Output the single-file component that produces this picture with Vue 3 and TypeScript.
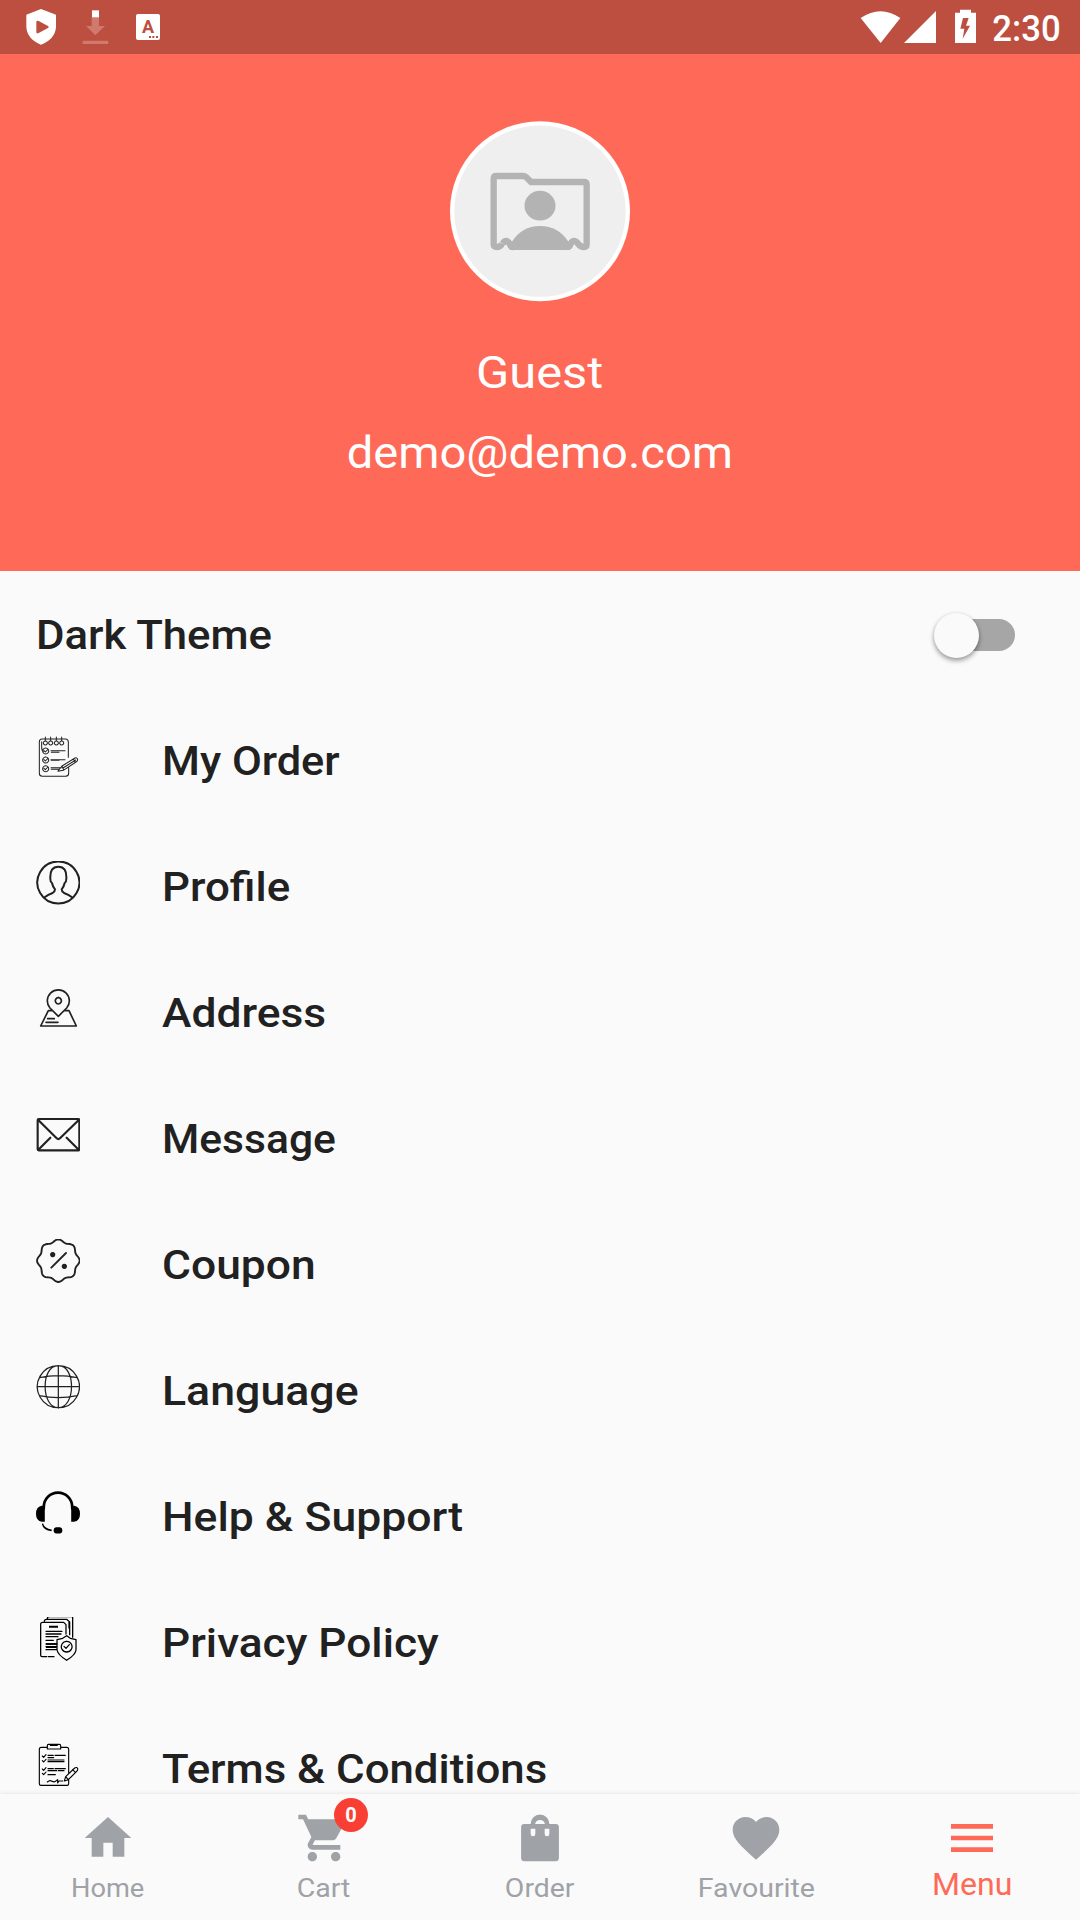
<script setup lang="ts">
interface MenuItem {
  label: string
  box: string
  stroke: string
  width: number
  fill?: string
  stretch: number
  color?: string
}

interface NavItem {
  label: string
  path: string
  badge?: string
  active?: boolean
  stretch: number
}

// Outline of the coupon seal: a circle with eight soft lobes.
const sealOutline = (cx: number, cy: number, radius: number, depth: number): string => {
  const points: string[] = []
  for (let i = 0; i < 96; i++) {
    const a = (i / 96) * Math.PI * 2
    const r = radius + depth * Math.cos(8 * a)
    points.push(`${(cx + r * Math.cos(a)).toFixed(2)} ${(cy + r * Math.sin(a)).toFixed(2)}`)
  }
  return `M${points.join('L')}Z`
}

const items: MenuItem[] = [
  {
    label: 'My Order',
    box: '48 45 132 132',
    width: 3.1,
    stretch: 1.07,
    stroke:
      'M145 112V66Q145 57 136 57H66Q58 57 58 66V160Q58 169 67 169H137Q146 169 146 160V143 M65 65V82Q65 92 70 94 M76 51V63 M92 51V63 M109 51V63 M125 51V63 ' +
      'M76 63a6 6 0 1 0 .1 0 M92 63a6 6 0 1 0 .1 0 M109 63a6 6 0 1 0 .1 0 M125 63a6 6 0 1 0 .1 0 ' +
      'M77 84a9 9 0 1 0 .1 0 M77 111a9 9 0 1 0 .1 0 M77 137a9 9 0 1 0 .1 0 M72 92l4 4 8-8 M72 119l4 4 8-8 M72 145l4 4 8-8 ' +
      'M93 92H135 M94 97H117 M93 119H135 M94 121H117 M93 143H124 M94 148H117 M114 153L126 138L165 114Q172 112 173 119Q173 123 168 126L130 151L114 154Z M126 138L131 150 M129 144L167 120 M160 117L166 127',
  },
  {
    label: 'Profile',
    box: '48 423 132 132',
    width: 6,
    stretch: 1.083,
    stroke:
      'M115 424.500a63 63 0 1 0 .1 0 M74 532Q84 524 98 519Q105 515 105 508Q98 499 96 489Q91 486 91 476Q89 440 115 440Q141 440 139 476Q139 486 134 489Q132 499 125 508Q125 515 132 519Q146 524 156 532',
  },
  {
    label: 'Address',
    box: '48 51 132 132',
    width: 5,
    stretch: 1.095,
    stroke:
      'M115 139L90 114A33 33 0 1 1 140 114Z M115 83a9 9.500 0 1 0 .1 0 M96 122H85L62 168H169L147 122H134 M83 146H103 M78 157H114',
  },
  {
    label: 'Message',
    box: '48 429 132 132',
    width: 6.4,
    stretch: 1.052,
    stroke: 'M56 447H175Q178 447 178 450V538Q178 541 175 541H56Q53 541 53 538V450Q53 447 56 447Z M54 449L110 505Q115 510 120 505L177 449 M55 539L91 503 M176 539L140 503',
  },
  {
    label: 'Coupon',
    box: '48 57 132 132',
    width: 5.6,
    stretch: 1.096,
    stroke: sealOutline(115, 122, 60, 3.9) + ' M94 143L138 99',
    fill: 'M98 96a8 8 0 1 0 .1 0Z M133 131a8 8 0 1 0 .1 0Z',
  },
  {
    label: 'Language',
    box: '48 433 132 135',
    width: 3.8,
    stretch: 1.103,
    stroke:
      'M115 435a64.500 64.500 0 1 0 .1 0 M115 434V565 M50 499H180 M115 435C60 434 62 565 115 564 M115 435C170 434 168 565 115 564 M57 472Q115 459 173 472 M57 527Q115 539 173 527',
  },
  {
    label: 'Help & Support',
    box: '48 813 135 132',
    width: 8,
    stretch: 1.099,
    color: '#000',
    stroke: 'M72 865V860A43 43 0 0 1 159 860V865',
    fill: 'M75 857V906H66Q48 903 48 882Q48 860 65 857Z M156 857V906H165Q183 903 183 882Q183 860 166 857Z M109 923H122Q129 924 129 932Q129 941 121 942H110Q102 941 102 932Q102 924 109 923Z M66 912L70 911Q73 926 96 930V935Q69 932 66 912Z',
  },
  {
    label: 'Privacy Policy',
    box: '48 51 132 132',
    width: 3.8,
    stretch: 1.092,
    color: '#000',
    stroke:
      'M80 170H66Q62 170 62 166V73Q62 67 68 67H131L138 74V102 M73 64Q73 58 80 58H140L149 66V104 M82 56Q82 50 89 50H158V112 M147 66V84 M78 94H126 M78 102H123 M78 110H114 M78 121H100 M78 132H112 M78 140H111 M85 170H102 M78 149H110 ' +
      'M140 107L151 115L168 119V150Q166 165 140 181Q114 165 111 150V119L128 115Z M140 124a16 16 0 1 0 .1 0 M132 139L138 145L148 134',
    fill: 'M87 77H114V83H87Z M78 130H110V134H78Z M78 138H110V144H78Z',
  },
  {
    label: 'Terms & Conditions',
    box: '48 429 132 132',
    width: 3.4,
    stretch: 1.081,
    color: '#000',
    stroke:
      'M82 442H64Q58 442 58 448V551Q58 556 63 556H141Q146 556 146 551V540 M58 458V468 M123 442H140Q146 442 146 448V520 M85 433H118Q122 433 122 437V447H82V437Q82 433 85 433Z M91 436H112 ' +
      'M67 468L71 472L78 464 M67 482L71 486L78 478 M67 507L71 511L78 503 M67 520L71 524L78 516 M84 466H100 M105 466H136 M84 473H101 M84 480H132 M84 485H132 M84 506H100 M105 506H136 M84 512H110 M115 512H132 M84 524H106 ' +
      'M82 546Q90 539 96 544Q104 548 109 542L113 539V549L117 543H128 M133 543L137 530L164 504Q171 500 173 506Q174 510 170 514L145 539Z M137 530L145 539 M158 509L166 517',
  },
]

const nav: NavItem[] = [
  { label: 'Home', stretch: 1.09, path: 'M10 20v-6h4v6h5v-8h3L12 3 2 12h3v8z' },
  {
    label: 'Cart',
    stretch: 1.14,
    badge: '0',
    path: 'M7 18c-1.100 0-1.990.9-1.990 2S5.900 22 7 22s2-.9 2-2-.9-2-2-2zM1 2v2h2l3.600 7.590-1.350 2.450c-.16.28-.25.61-.25.96 0 1.100.9 2 2 2h12v-2H7.420c-.14 0-.25-.11-.25-.25l.03-.12.9-1.630h7.450c.75 0 1.410-.41 1.750-1.030l3.580-6.490c.08-.14.12-.31.12-.48 0-.55-.45-1-1-1H5.210l-.94-2H1zm16 16c-1.100 0-1.990.9-1.990 2s.89 2 1.990 2 2-.9 2-2-.9-2-2-2z',
  },
  {
    label: 'Order',
    stretch: 1.135,
    path: 'M5.300 6H8V5.900A4 4 0 0 1 16 5.900V6H18.700Q20.100 6 20.100 7.400V20.500Q20.100 22 18.600 22H5.400Q3.900 22 3.900 20.500V7.400Q3.900 6 5.300 6ZM9.900 6H14.100A2.150 2.150 0 0 0 9.900 6ZM8 8V10.300A1 1 0 0 0 10 10.300V8ZM14 8V10.300A1 1 0 0 0 16 10.300V8Z',
  },
  {
    label: 'Favourite',
    stretch: 1.14,
    path: 'M12 21.350l-1.450-1.320C5.400 15.360 2 12.280 2 8.500 2 5.420 4.420 3 7.500 3c1.740 0 3.410.81 4.500 2.090C13.090 3.810 14.760 3 16.500 3 19.580 3 22 5.420 22 8.500c0 3.780-3.400 6.860-8.550 11.540L12 21.350z',
  },
  { label: 'Menu', stretch: 1.05, active: true, path: 'M3 18h18v-2H3v2zm0-5h18v-2H3v2zm0-7v2h18V6H3z' },
]
</script>

<template>
  <div class="screen">
    <div class="status">
      <div class="notices">
        <svg width="30" height="54" viewBox="78 0 90 162">
          <path fill="#fff" fill-rule="evenodd" d="M123 27L168 44V82Q165 118 123 134Q82 118 79 82V44Z M109 66V96Q109 103 116 99L144 84Q149 81 144 78L116 63Q109 60 109 66Z" />
        </svg>
        <svg width="27" height="54" viewBox="246 0 81 162">
          <path fill="#d07a6d" d="M275 52H297V78H315L286 106L258 78H275Z M248 122H325V132H248Z" />
          <path fill="#fff" d="M276 31H297V52H276Z" />
        </svg>
        <svg width="26" height="54" viewBox="408 0 78 162">
          <rect x="411" y="42" width="72" height="78" rx="6" fill="#fff" />
          <text x="447" y="99" text-anchor="middle" class="letter">A</text>
          <path fill="#bc4f40" d="M450 108h6v6h-6z M460 108h6v6h-6z M471 108h6v6h-6z" />
        </svg>
      </div>
      <div class="system">
        <svg width="41" height="54" viewBox="60 0 123 162">
          <path fill="#fff" d="M62 54Q122 13 181 54L122 129Z" />
        </svg>
        <svg class="signal" width="32" height="54" viewBox="192 0 96 162">
          <path fill="#fff" d="M288 33V129H192Z" />
        </svg>
        <svg class="battery" width="23" height="54" viewBox="342 0 69 162">
          <path fill="#fff" fill-rule="evenodd" d="M345 38H360V29H393V38H408V129H345Z M369 54L361 86H373L368 116L390 77H378L386 54Z" />
        </svg>
        <span class="time">2:30</span>
      </div>
    </div>

    <header class="profile">
      <svg class="avatar" width="182" height="182" viewBox="57 60 546 546">
        <circle cx="330" cy="333.500" r="270" fill="#fff" />
        <circle cx="330" cy="333.500" r="257" fill="#efefef" />
        <path
          d="M218 431Q228 415 239 431Q242 442 250 441M411 441Q420 441 422 431Q432 415 444 431Q451 441 462 441Q470 441 470 432V254Q470 246 462 246H303L289 232Q285 228 278 228H199Q191 228 191 236V432Q191 441 201 441Q212 441 216 431"
          fill="none"
          stroke="#b3b3b3"
          stroke-width="19"
        />
        <ellipse cx="330" cy="317" rx="46.500" ry="44.500" fill="#b3b3b3" />
        <path d="M240 450Q238 440 247 424Q275 379 330 378Q386 379 414 424Q423 440 420 450Z" fill="#b3b3b3" />
      </svg>
      <div class="name">Guest</div>
      <div class="email">demo@demo.com</div>
    </header>

    <main class="list">
      <div class="row theme">
        <span class="label">Dark Theme</span>
        <span class="switch"><span class="thumb"></span></span>
      </div>
      <div v-for="item in items" :key="item.label" class="row">
        <svg class="icon" width="44" height="44" :viewBox="item.box" :style="{ color: item.color }">
          <path :d="item.stroke" fill="none" stroke="currentColor" :stroke-width="item.width" stroke-linecap="round" stroke-linejoin="round" />
          <path v-if="item.fill" :d="item.fill" fill="currentColor" />
        </svg>
        <span class="label" :style="{ transform: `scaleX(${item.stretch})` }">{{ item.label }}</span>
      </div>
    </main>

    <nav class="nav">
      <div v-for="n in nav" :key="n.label" class="tab" :class="{ active: n.active }">
        <div class="glyph">
          <svg width="56" height="56" viewBox="0 0 24 24"><path :d="n.path" fill="currentColor" fill-rule="evenodd" /></svg>
          <span v-if="n.badge" class="badge">{{ n.badge }}</span>
        </div>
        <span class="caption" :style="{ transform: `scaleX(${n.stretch})` }">{{ n.label }}</span>
      </div>
    </nav>
  </div>
</template>

<style>
body {
  background: #fafafa;
}
</style>

<style scoped>
.screen {
  width: 1080px;
  height: 1920px;
  display: flex;
  flex-direction: column;
  overflow: hidden;
  background: #fafafa;
  color: #212121;
  font-family: Roboto, "Liberation Sans", sans-serif;
}
svg {
  display: block;
  flex: none;
}
.status {
  height: 54px;
  flex: none;
  display: flex;
  justify-content: space-between;
  background: #bc4f40;
  color: #fff;
}
.notices {
  display: flex;
  gap: 26px;
  padding-left: 26px;
}
.letter {
  font: 700 54px Roboto, sans-serif;
  fill: #bc4f40;
}
.system {
  display: flex;
  padding-right: 18px;
}
.signal {
  margin-left: 3px;
}
.battery {
  margin-left: 18px;
}
.time {
  width: 71px;
  margin-left: 14px;
  font-size: 36px;
  font-weight: 500;
  line-height: 58px;
  white-space: nowrap;
  transform: scaleX(0.965);
}
.profile {
  height: 517px;
  flex: none;
  display: flex;
  flex-direction: column;
  align-items: center;
  background: #fe6a57;
  color: #fff;
  white-space: nowrap;
}
.avatar {
  margin-top: 66px;
}
.name {
  margin-top: 44px;
  font-size: 45px;
  line-height: 54px;
  transform: scaleX(1.085);
}
.email {
  margin-top: 26px;
  font-size: 45px;
  line-height: 54px;
  transform: scaleX(1.045);
}
.list {
  flex: 1;
  min-height: 0;
  overflow: hidden;
  padding-top: 1px;
}
.row {
  height: 126px;
  display: flex;
  align-items: center;
  padding-left: 36px;
}
.theme {
  justify-content: space-between;
  padding-right: 65px;
}
.theme .label {
  transform: scaleX(1.079);
}
.icon {
  margin-right: 82px;
  position: relative;
  top: -4px;
}
.label {
  font-size: 40.5px;
  font-weight: 500;
  line-height: 48px;
  white-space: nowrap;
  transform-origin: left center;
}
.switch {
  width: 74px;
  height: 32px;
  border-radius: 16px;
  background: #a6a6a6;
  display: flex;
  align-items: center;
}
.thumb {
  width: 45px;
  height: 45px;
  flex: none;
  margin-left: -7.5px;
  border-radius: 50%;
  background: #fafafa;
  box-shadow: 0 3px 5px rgba(0, 0, 0, 0.3), 0 1px 4px rgba(0, 0, 0, 0.15);
}
.nav {
  height: 126px;
  flex: none;
  display: flex;
  position: relative;
  background: #fafafa;
  box-shadow: 0 -1px 4px rgba(0, 0, 0, 0.08);
}
.tab {
  width: 216px;
  display: flex;
  flex-direction: column;
  align-items: center;
  padding-top: 16px;
  color: #9fa2a6;
}
.active {
  color: #fe6a57;
}
.glyph {
  position: relative;
}
.badge {
  position: absolute;
  left: 38px;
  top: -12px;
  width: 34px;
  height: 34px;
  border-radius: 50%;
  background: #f93f34;
  color: #fff;
  font-size: 20px;
  font-weight: 700;
  line-height: 35px;
  text-align: center;
}
.caption {
  margin-top: 8px;
  font-size: 25px;
  line-height: 30px;
}
.active .caption {
  margin-top: 1px;
  font-size: 30.5px;
  line-height: 36px;
}
</style>
